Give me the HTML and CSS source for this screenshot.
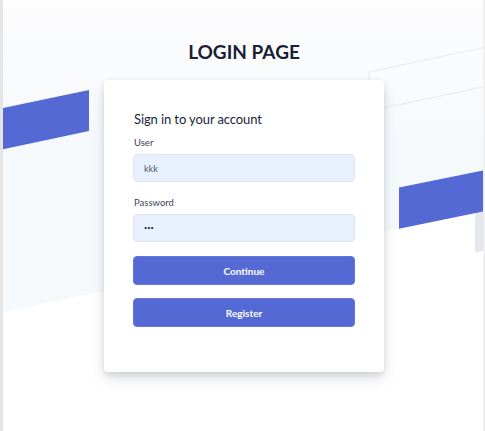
FILE: index.html
```html
<!DOCTYPE html>
<html lang="en">
<head>
<meta charset="utf-8">
<title>Login Page</title>
<link rel="stylesheet" href="styles.css">
</head>
<body>
<div class="page">
  <svg class="bg" viewBox="3 0 480 431" preserveAspectRatio="xMinYMin slice" aria-hidden="true">
    <defs>
      <linearGradient id="fade" x1="0" y1="0" x2="0" y2="1" gradientUnits="objectBoundingBox">
        <stop offset="0" stop-color="#fdfdfe"/>
        <stop offset="0.45" stop-color="#f6f9fc"/>
        <stop offset="1" stop-color="#f6f9fc"/>
      </linearGradient>
    </defs>
    <polygon points="0,0 485,0 485,210 0,313" fill="url(#fade)"/>
    <polyline points="485,47.3 369,72 369,111 485,86.5" fill="none" stroke="#e6ebf1" stroke-width="1"/>
    <polygon points="0,108.6 89,90 89,131 0,149.8" fill="#5469d4"/>
    <polygon points="475,205 485,203 485,250.6 475,252.7" fill="#e3e8ee"/>
    <polygon points="399,187.5 485,170 485,211 399,228.8" fill="#5469d4"/>
  </svg>
  <main class="content">
    <h1 class="title">LOGIN PAGE</h1>
    <form class="card">
      <h2 class="card-heading">Sign in to your account</h2>
      <label class="field-label" for="user">User</label>
      <input class="field-input" id="user" type="text" value="kkk">
      <label class="field-label field-label-gap" for="password">Password</label>
      <input class="field-input field-input-secret" id="password" type="password" value="kkk">
      <button class="btn btn-first" type="button">Continue</button>
      <button class="btn btn-next" type="button">Register</button>
    </form>
  </main>
</div>
</body>
</html>
```

FILE: styles.css
```css
* { box-sizing: border-box; }
html, body { margin: 0; padding: 0; }
body {
  font-family: Lato, "Open Sans", sans-serif;
  color: #1a1f36;
  background: #ffffff;
}
.page {
  position: relative;
  min-height: 431px;
  height: 431px;
  overflow: hidden;
  border-left: 3px solid #e5e5e5;
  border-right: 2px solid #f0f0f0;
}
.bg {
  position: absolute;
  left: 0;
  top: 0;
  width: 480px;
  height: 431px;
}
.content {
  position: relative;
  display: flex;
  flex-direction: column;
  align-items: center;
  padding-top: 38px;
  padding-left: 2px;
}
.title {
  margin: 0;
  font-family: Lato, "Open Sans", sans-serif;
  font-size: 19px;
  line-height: 28px;
  font-weight: 700;
  color: #1a1f36;
}
.card {
  margin-top: 14px;
  width: 280px;
  background: #ffffff;
  border-radius: 4px;
  box-shadow: rgba(60, 66, 87, 0.14) 0 7px 14px 0, rgba(0, 0, 0, 0.10) 0 3px 6px 0;
  padding: 29px 29px 45px;
  display: flex;
  flex-direction: column;
}
.card-heading {
  margin: 0;
  font-size: 13px;
  line-height: 20px;
  font-weight: 400;
  letter-spacing: -0.1px;
  color: #1a1f36;
  padding-left: 1px;
}
.field-label {
  margin-top: 7px;
  padding-left: 1px;
  font-size: 9.5px;
  line-height: 14px;
  color: #3c4257;
}
.field-label-gap { margin-top: 14px; }
.field-input {
  margin-top: 4px;
  height: 28px;
  width: 100%;
  padding: 0 10px;
  border: 1px solid #dfe6f3;
  border-radius: 4px;
  background: #e8f0fe;
  font-family: Lato, "Open Sans", sans-serif;
  font-size: 9px;
  color: #4f5566;
  outline: none;
}
.field-input-secret {
  font-size: 5.5px;
  color: #1a1f36;
}
.btn {
  height: 29px;
  width: 100%;
  border: 1px solid #6677dc;
  border-radius: 4px;
  background: #5469d4;
  color: #ffffff;
  font-family: Lato, "Open Sans", sans-serif;
  font-size: 10px;
  font-weight: 700;
  cursor: pointer;
}
.btn-first { margin-top: 14px; }
.btn-next { margin-top: 13px; }
```
